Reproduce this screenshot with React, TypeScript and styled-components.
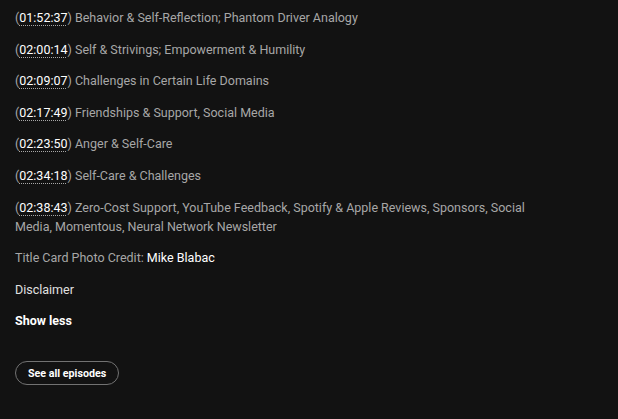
import React from "react";
import styled, { createGlobalStyle } from "styled-components";

const Global = createGlobalStyle`
  html, body { margin: 0; padding: 0; background: #121212; }
  body { font-family: Roboto, "Noto Sans", "Liberation Sans", sans-serif; -webkit-font-smoothing: antialiased; }
`;

const Page = styled.div`
  width: 618px;
  height: 419px;
  box-sizing: border-box;
  background: #121212;
  padding: 8px 15px 0 15px;
  overflow: hidden;
`;

const Description = styled.div`
  width: 540px;
  color: #a7a7a7;
  font-size: 12.5px;
  line-height: 19px;
`;

const Para = styled.p`
  margin: 0 0 12.6px 0;
`;

const Stamp = styled.a`
  color: #ffffff;
  text-decoration: underline dotted #a7a7a7;
  text-decoration-thickness: 1px;
  text-underline-offset: 3px;
`;

const Strong = styled.span`
  color: #ffffff;
`;

const Plain = styled.p`
  margin: 0 0 12.6px 0;
  color: #e0e0e0;
`;

const ShowLess = styled.button`
  background: none;
  border: none;
  padding: 0;
  margin: 0;
  font-family: inherit;
  font-size: 12.5px;
  font-weight: 700;
  line-height: 19px;
  color: #ffffff;
  cursor: pointer;
`;

const EpisodesButton = styled.button`
  margin-top: 31px;
  height: 24px;
  padding: 0 12px;
  border: 1px solid #727272;
  border-radius: 999px;
  background: transparent;
  color: #ffffff;
  font-family: inherit;
  font-size: 10.7px;
  font-weight: 700;
  cursor: pointer;
`;

const Footer = styled.div`
  display: flex;
  flex-direction: column;
  align-items: flex-start;
`;

const chapters: [string, string][] = [
  ["01:52:37", "Behavior & Self-Reflection; Phantom Driver Analogy"],
  ["02:00:14", "Self & Strivings; Empowerment & Humility"],
  ["02:09:07", "Challenges in Certain Life Domains"],
  ["02:17:49", "Friendships & Support, Social Media"],
  ["02:23:50", "Anger & Self-Care"],
  ["02:34:18", "Self-Care & Challenges"],
  [
    "02:38:43",
    "Zero-Cost Support, YouTube Feedback, Spotify & Apple Reviews, Sponsors, Social Media, Momentous, Neural Network Newsletter",
  ],
];

export default function App() {
  return (
    <Page>
      <Global />
      <Description>
        {chapters.map(([t, text]) => (
          <Para key={t}>
            (<Stamp href="#">{t}</Stamp>) {text}
          </Para>
        ))}
        <Para>
          Title Card Photo Credit: <Strong>Mike Blabac</Strong>
        </Para>
        <Plain>Disclaimer</Plain>
      </Description>
      <Footer>
        <ShowLess>Show less</ShowLess>
        <EpisodesButton>See all episodes</EpisodesButton>
      </Footer>
    </Page>
  );
}
